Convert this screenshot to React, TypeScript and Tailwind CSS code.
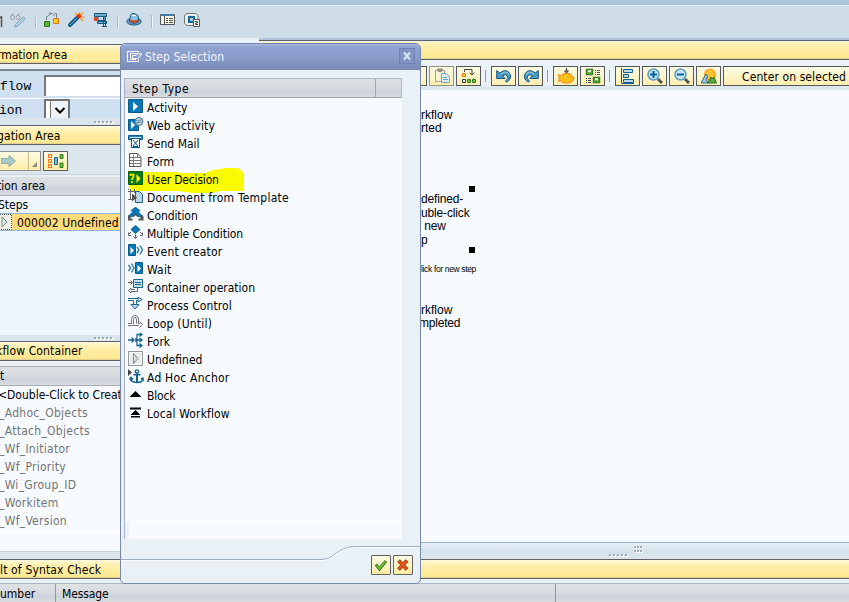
import type { ReactNode } from "react";

const TAHOMA = "font-['DejaVu_Sans_Condensed','DejaVu_Sans',sans-serif]";
const YELLOW =
  "border-y border-[#5f6063] bg-[linear-gradient(#fffbe0_0%,#fff3bc_18%,#ffeda0_45%,#ffe995_90%,#d9cb8c_100%)]";
const GREY = "bg-[linear-gradient(#dde1e4_0%,#d8dce0_45%,#cdd3dc_70%,#dadddf_100%)]";

function Svg({ children, w = 16, h = 16 }: { children: ReactNode; w?: number; h?: number }) {
  return (
    <svg width={w} height={h} viewBox={`0 0 ${w} ${h}`} fill="none" className="block shrink-0">
      {children}
    </svg>
  );
}

const B = "#0878b8";
const D = "#0a5a88";

const stepIcons: Record<string, ReactNode> = {
  activity: (
    <>
      <path d="M.5.5h14v13H.5z" fill={B} stroke={D} />
      <path d="M5 3v9l5-4.500z" fill="#fff" />
    </>
  ),
  web: (
    <>
      <path d="M.5 2.500h10v11H.5z" fill={B} stroke={D} />
      <path d="M3 4v8l4-4z" fill="#fff" />
      <circle cx="11" cy="4.500" r="4" fill="#bdd4e3" stroke="#50738c" />
      <path d="M8 3.500c2 1 4-1 6 1M9 7c1-3 3-3 4-5M7.500 5.500h6" stroke="#6d94ae" />
    </>
  ),
  mail: (
    <>
      <path d="M.5.500h14v4H.5z" fill="#2d86b8" stroke={D} />
      <path d="M2 2.500h11" stroke="#cfeaf7" />
      <path d="M3.500 3.500h8v9h-8z" fill="#fff" stroke={D} />
      <path d="M5 5l5 6M10 5l-5 6M5 11.500h5" stroke={D} />
    </>
  ),
  form: (
    <>
      <path d="M1.500.500h8l3.500 4v9H1.500z" fill="#fff" stroke="#555" />
      <path d="M9.500 0v4.500H13M2 4.500h8M2 7.500h11M2 10.500h11M5.500 2v11" stroke="#777" />
    </>
  ),
  decision: (
    <>
      <path d="M.5.500h14v13H.5z" fill="#067b19" stroke="#05610f" />
      <path d="M2.500 5V3.500h3V6L4 7.500V9M4 10v2" stroke="#ffe600" strokeWidth="1.700" />
      <path d="M8.500 3v9l4-4.500z" fill="#ff0" />
    </>
  ),
  document: (
    <>
      <path d="M0 2.500h10M2.500 0v10M6.500 0v4M0 .500h1M0 10.500h4" stroke="#666" />
      <path d="M7.500 2.500h4l3 3v8h-7z" fill="#b9d6ea" stroke="#245f88" />
      <path d="M4 4.500v8l5-4z" fill="#555" />
    </>
  ),
  condition: (
    <>
      <path d="M1.500 8.500L.500 10v2.500h4M13.500 8.500l1 1.500v2.500h-4M3 8l-2.500 4M12 8l2.500 4" stroke="#555" strokeWidth="2" />
      <path d="M7.500 0L12 3.500 10.500 5 14 8.500 11 10 7.500 7.500 4 10 1 8.500 4.500 5 3 3.500z" fill={B} stroke={D} strokeWidth=".6" />
      <path d="M5 9.500l2.500-2 2.500 2" stroke="#555" strokeWidth="1.500" />
    </>
  ),
  multiple: (
    <>
      <path d="M7.500.500l4.500 4-4.500 4-4.500-4z" fill={B} stroke={D} />
      <path d="M3 7L.700 9.500M.500 7.500v3H3M12 7l2.300 2.500M14.500 7.500v3H12M7.500 9.500v4M5.500 11.500l2 2 2-2" stroke="#666" />
    </>
  ),
  event: (
    <>
      <path d="M.5 1.500h7v11h-7z" fill={B} stroke={D} />
      <path d="M2.500 4v7L6 7.500z" fill="#fff" />
      <path d="M9 4l2 3-2 3M12 2.500L14.500 7 12 11.500" stroke="#397fa8" strokeWidth="1.500" />
    </>
  ),
  wait: (
    <>
      <path d="M7.500 1.500h7v11h-7z" fill={B} stroke={D} />
      <path d="M9.500 4v7L13 7.500z" fill="#fff" />
      <path d="M.5 4l2 3-2 3M3.500 2.500L6 7 3.500 11.500" stroke="#397fa8" strokeWidth="1.500" />
    </>
  ),
  container: (
    <>
      <path d="M5.500.500h9v8h-9z" fill="#c3dfed" stroke="#17638c" />
      <path d="M7 3.500h6M7 5.500h6" stroke="#17638c" />
      <path d="M0 3.500h4M2.500 1.500l2 2-2 2M9.500 9v3.500H3V14L.500 11.500 3 9v1.500h4" stroke="#666" />
    </>
  ),
  process: (
    <>
      <path d="M0 1.500h10M0 3.500h5.500v5M8.500 8.500v-5H10M10 0l4 2.500L10 5z" stroke="#15668f" fill="none" />
      <path d="M3 7.500h8L7 12z" fill="#b9dcf0" stroke="#15668f" />
    </>
  ),
  loop: (
    <>
      <path d="M3.500 9V4.500Q3.500.500 7 .500t3.500 4V9M5.500 9V4.500Q5.500 2.500 7 2.500t1.500 2V8.500M0 8.500h3.500M0 10.500h11M10.500 8.500h2M11.500 6.500l3 3-3 3" stroke="#777" />
    </>
  ),
  fork: (
    <>
      <path d="M0 7h6M3.500 4.500L6 7 3.500 9.500M7 6h2V1.500h5M7 8h2v4.500h5M8 7h6M11.500-.500L14 1.500l-2.500 2M11.500 5L14 7l-2.500 2M11.500 10.500L14 12.500l-2.500 2" stroke="#15668f" strokeWidth="1.300" />
    </>
  ),
  undefined: (
    <>
      <path d="M.5.500h14v14H.5z" stroke="#333" strokeDasharray="1 1" />
      <path d="M2 2h11v11H2z" fill="#ececec" />
      <path d="M5.500 2.500v10l4.500-5z" fill="#cfe2dd" stroke="#7b918d" />
    </>
  ),
  anchor: (
    <>
      <path d="M0 0v7l4-3.500z" fill="#444" />
      <path d="M9 4v10" stroke="#15668f" strokeWidth="2" />
      <circle cx="9" cy="2.500" r="1.700" stroke="#15668f" strokeWidth="1.300" />
      <path d="M5.500 5.800h7M3 8.500v3Q5 13.500 9 13.500t6-2v-3M1.500 10.500L3 8.500l2 2M13 10.500l2-2" stroke="#15668f" strokeWidth="1.500" />
    </>
  ),
  block: <path d="M7.500 4l6 6h-12z" fill="#000" />,
  local: (
    <>
      <path d="M2 3.500h11" stroke="#000" strokeWidth="2" />
      <path d="M7.500 5l5 5h-10zM3 11h9v1.500H3z" fill="#000" />
    </>
  ),
};

const steps: [string, string, string][] = [
  ["activity", "Activity", ""],
  ["web", "Web activity", "tracking-[0.1px]"],
  ["mail", "Send Mail", ""],
  ["form", "Form", ""],
  ["decision", "User Decision", "tracking-[-0.17px]"],
  ["document", "Document from Template", "tracking-[0.22px]"],
  ["condition", "Condition", "tracking-[-0.1px]"],
  ["multiple", "Multiple Condition", "tracking-[-0.1px]"],
  ["event", "Event creator", "tracking-[0.18px]"],
  ["wait", "Wait", "tracking-[0.2px]"],
  ["container", "Container operation", ""],
  ["process", "Process Control", "tracking-[0.1px]"],
  ["loop", "Loop (Until)", "tracking-[0.2px]"],
  ["fork", "Fork", ""],
  ["undefined", "Undefined", ""],
  ["anchor", "Ad Hoc Anchor", "tracking-[0.22px]"],
  ["block", "Block", "tracking-[-0.15px]"],
  ["local", "Local Workflow", "tracking-[0.14px]"],
];

function TopSep() {
  return <div className="h-[13px] w-[2px] border-l border-[#a3b9d0] bg-[#eef4f9]" />;
}

function TopToolbar() {
  return (
    <header className="flex h-[33px] shrink-0 items-start border-t border-[#dce8f2] bg-[#cfdde8] pt-[6px]">
      <div className="w-[10px]">
        <Svg w={4}>
          <path d="M0 5.500h2M1.500 4v11" stroke="#555" strokeWidth="1.500" />
        </Svg>
      </div>
      <div className="w-[25px]">
        <Svg>
          <path d="M1 4q1-3 3-2M7 4q1-3 3-2" stroke="#9da5a9" />
          <circle cx="2.500" cy="5.500" r="2" stroke="#9da5a9" />
          <circle cx="8" cy="5.500" r="2" stroke="#9da5a9" />
          <path d="M13.500 4.500l-8 8L4.500 15l3-.500 8-8z" fill="#b4d0df" stroke="#86a6bb" />
        </Svg>
      </div>
      <div className="flex w-[9px] pt-[3px]"><TopSep /></div>
      <div className="w-[24px]">
        <Svg>
          <path d="M.5 9.500h5v5h-5z" fill="#55b626" stroke="#346f25" />
          <path d="M9.500 6.500h5v5h-5z" fill="#ffca16" stroke="#e37418" />
          <path d="M2.500 8V4.500h1l3-3h2l2 2.500M6 0v3M12.500 6V1.500h-2" stroke="#768491" />
        </Svg>
      </div>
      <div className="w-[25px]">
        <Svg>
          <path d="M2 13L9 6" stroke="#195b88" strokeWidth="4" strokeLinecap="round" />
          <path d="M2 13L9 6" stroke="#69aed0" strokeLinecap="round" />
          <path d="M9.500 5.500l3-3" stroke="#d72b13" strokeWidth="4" />
          <path d="M7 1l2 2M12-.500l-1 3M15 1l-3 2M16 5h-3M15 9l-3-3" stroke="#f59a19" strokeWidth="1.300" />
        </Svg>
      </div>
      <div className="w-[24px]">
        <Svg>
          <path d="M1.500 1.500h12v3h-12zM4.500 9.500h9v2h-9z" fill="#6fabc9" stroke="#115b86" />
          <path d="M5 4.500h7v4H5z" fill="#c1d9e5" stroke="#115b86" />
          <path d="M10.500 4v10M12.500 4v10M9 14.500h5" stroke="#115b86" />
          <circle cx="3" cy="7" r="2.300" fill="#d94b24" />
        </Svg>
      </div>
      <div className="flex w-[9px] pt-[3px]"><TopSep /></div>
      <div className="w-[25px]">
        <Svg>
          <ellipse cx="8" cy="9.500" rx="7.300" ry="3.500" fill="#5c9fc8" stroke="#165d89" />
          <path d="M3.500 9.500l1-6Q5.500.500 8 1.500T12 3.500l.800 6Q8 13 3.500 9.500z" fill="#8fc2e1" stroke="#165d89" />
          <path d="M3.500 8.500Q8 11 12.500 8.500" stroke="#c94625" strokeWidth="2.300" />
          <path d="M6 3.500h4" stroke="#fff" />
        </Svg>
      </div>
      <div className="flex w-[9px] pt-[3px]"><TopSep /></div>
      <div className="w-[24px]">
        <Svg>
          <path d="M.5 2.500h14v10H.5z" fill="#f5f1e5" stroke="#555" />
          <path d="M1 3h13" stroke="#447aa3" strokeWidth="2" />
          <path d="M6 6.500h2M9 6.500h4M6 8.500h2M9 8.500h4M6 10.500h2M9 10.500h4" stroke="#555" />
          <path d="M4.500 4v8" stroke="#555" />
        </Svg>
      </div>
      <Svg>
        <path d="M3 1.500h9l2 2v8l-2 2H3L.500 11.500V3.500z" fill="#e7eef2" stroke="#777" />
        <path d="M5 5h5v5H5z" fill="#abd1e3" stroke="#156693" strokeWidth="2" />
        <path d="M9.500 7.500h6v7h-6z" fill="#fff" stroke="#555" />
        <path d="M11 9.500h2.500v1.500h-2v1.500H14" stroke="#444" />
      </Svg>
    </header>
  );
}

function Bar({ children, className = "" }: { children?: ReactNode; className?: string }) {
  return (
    <div className={`flex h-[20px] shrink-0 items-center whitespace-nowrap ${YELLOW} ${className}`}>
      {children}
    </div>
  );
}

function Dots({ className = "" }: { className?: string }) {
  return (
    <div className={`flex gap-[2px] ${className}`}>
      {[0, 1, 2, 3, 4].map((n) => (
        <i key={n} className="size-[2px] bg-[#9da9b8] shadow-[1px_1px_0_#fff]" />
      ))}
    </div>
  );
}

function LeftColumn() {
  return (
    <aside className="flex w-[259px] shrink-0 flex-col bg-[#e9f1f7] text-[12px]">
      <div className="h-[6px]" />
      <Bar><span className="-ml-[3px] pt-[2px]">rmation Area</span></Bar>
      <div className="h-[5px]" />
      <div className="h-[49px] border-t-2 border-[#7f858c] bg-[#cfe0f0] font-['Liberation_Mono',monospace] text-[13px]">
        <div className="flex h-[28px] items-center border-b border-white pt-[1px]">
          <span className="w-[44px] pt-[3px]">flow</span>
          <div className="h-[21px] w-[200px] border-t-2 border-l-2 border-[#777a7e] bg-white" />
        </div>
        <div className="flex h-[19px] items-start">
          <span className="w-[44px] pt-[2px] -ml-px">ion</span>
          <div className="ml-px flex h-[19px] w-[26px] border-t-2 border-r-2 border-l-2 border-[#707378] bg-white pl-[4px]">
            <div className="flex flex-1 justify-center border-l border-[#777] bg-[#edf2f6] pt-[5px]">
              <Svg w={12} h={9}>
                <path d="M1.500 2l4.500 4.500L10.500 2" stroke="#000" strokeWidth="2" />
              </Svg>
            </div>
          </div>
        </div>
      </div>
      <div className="h-[7px] bg-[#dce5ed] pt-[3px] pl-[94px]"><Dots /></div>
      <Bar><span className="-ml-[3px] pt-[1px] tracking-[0.1px]">gation Area</span></Bar>
      <div className="flex h-[30px] items-center gap-[3px] border-b border-[#c7d2dc] bg-[#dbe6ed] pt-[2px]">
        <div className="flex h-[20px] w-[41px] border border-l-0 border-[#8f9091] bg-[linear-gradient(#fffbe2,#ffeda7)]">
          <div className="flex w-[29px] items-center border-r border-[#c7bd94] pl-px">
            <Svg w={16} h={14}>
              <path d="M0 4.500h8V1.500l6.500 5.500L8 12.500V9.500H0z" fill="#a9cbc8" stroke="#8caaa3" />
            </Svg>
          </div>
          <div className="pt-[9px] pl-[3px]">
            <Svg w={7} h={7}><path d="M5 1v5H0z" fill="#8d8c83" /></Svg>
          </div>
        </div>
        <div className="flex h-[20px] w-[25px] items-center justify-center border border-[#606060] bg-[linear-gradient(#fffbe2,#ffeda7)] -ml-px">
          <Svg>
            <path d="M.5 1.500h3v3h-3zM.500 6.500h3v3h-3zM.500 11.500h3v3h-3z" stroke="#ef7b20" strokeWidth="1.200" />
            <path d="M6.500 4.500h3v7h-3z" fill="#7eb9dc" stroke="#176592" />
            <path d="M12 1.500h3v4h-3zM12 10h3v4.500h-3z" fill="#67b941" stroke="#368022" />
          </Svg>
        </div>
      </div>
      <div className={`mt-[2px] flex h-[19px] items-center border-b border-[#a8afb8] ${GREY}`}>
        <span className="-ml-[3px]">tion area</span>
      </div>
      <div className="h-[139px] shrink-0 bg-[#eff6fd]">
        <div className="flex h-[17px] items-center"><span className="-ml-[2px]">Steps</span></div>
        <div className="flex h-[18px] items-center overflow-hidden border-y border-[#91b6cf] bg-[#ffdb7d]">
          <div className="h-[16px] w-[12px] bg-[#f1eee5]">
            <Svg w={12} h={16}>
              <path d="M0 .500h11.500v15H0" stroke="#555" strokeDasharray="1 1" />
              <path d="M2 3v10l5-5z" fill="#d5e8e1" stroke="#7d918d" />
            </Svg>
          </div>
          <span className="ml-[5px] pt-px tracking-[0.1px]">000002 Undefined</span>
        </div>
      </div>
      <div className="h-[6px] bg-[#dbe5ed] pt-[2px] pl-[94px]"><Dots /></div>
      <Bar><span className="-ml-[4px] tracking-[0.13px]">kflow Container</span></Bar>
      <div className={`mt-[5px] flex h-[20px] shrink-0 items-center border-y border-[#a8afb8] ${GREY}`}>t</div>
      <div className="h-[165px] shrink-0 bg-[#f7fbff]">
        <div className="flex h-[18px] items-center whitespace-nowrap"><span className="-ml-[2px]">&lt;Double-Click to Creat</span></div>
        {["_Adhoc_Objects", "_Attach_Objects", "_Wf_Initiator", "_Wf_Priority", "_Wi_Group_ID", "_Workitem", "_Wf_Version"].map((t) => (
          <div key={t} className="flex h-[18px] items-center text-[#747474]">
            <span className="-ml-px tracking-[0.28px]">{t}</span>
          </div>
        ))}
        <div className="mt-[2px] h-px bg-white" />
      </div>
      <div className="flex-1 border-t border-[#c5d1da] bg-[#dce6ed]" />
    </aside>
  );
}

function Tool({ children, faded = false }: { children?: ReactNode; faded?: boolean }) {
  return (
    <div
      className={`mr-[2px] flex h-[20px] w-[25px] shrink-0 items-center justify-center border bg-[linear-gradient(#fffce6,#ffeeae)] ${faded ? "border-[#99927b]" : "border-[#57585a]"}`}
    >
      {children}
    </div>
  );
}

function ToolSep() {
  return <div className="mr-[5px] ml-[2px] h-[12px] w-px bg-[#989a9c]" />;
}

const undo = (
  <>
    <path d="M.7 2.500v8h8.500L6.500 7.800Q9.500 5.500 11.300 8T9.500 13l1 1.200Q15.800 11.500 14.300 6.500 11-.500 3.800 5z" fill="#4b9ac4" stroke="#155c88" />
    <path d="M4.500 6Q11 1.500 13 7" stroke="#a5d2e9" />
  </>
);

function Zoom({ plus = false }: { plus?: boolean }) {
  return (
    <Svg>
      <path d="M11 11l4 4" stroke="#555" strokeWidth="3" />
      <circle cx="6.500" cy="6.500" r="5.500" fill="#c5e5f4" stroke="#5b9dbd" strokeWidth="1.500" />
      <path d={plus ? "M3 6.500h7M6.500 3v7" : "M3 6.500h7"} stroke="#075f96" strokeWidth="2" />
    </Svg>
  );
}

function Editor() {
  return (
    <main className="flex min-w-0 flex-1 flex-col">
      <div className="h-[4px] shrink-0 border-t-2 border-b border-t-[#b2c4d5] border-b-[#e9f1f7] bg-[#5f6063]" />
      <div className={`h-[18px] shrink-0 border-b border-[#5f6063] bg-[linear-gradient(#fff3bc_0%,#ffeda0_40%,#ffe995_90%,#d9cb8c_100%)]`} />
      <div className="flex h-[30px] shrink-0 items-start overflow-hidden border-b-[4px] border-[#dde7ef] bg-[#eaf1f7] pt-[6px] pl-[143px]">
        <Tool />
        <Tool faded>
          <Svg>
            <path d="M1.500 2.500h9v11h-9z" fill="#f9f4d8" stroke="#a5a291" />
            <path d="M3 1.500h6M4 3h4" stroke="#8e9082" strokeWidth="2" />
            <path d="M7.500 5.500h5l3 3v6h-8z" fill="#dcecf0" stroke="#76a5b8" />
            <path d="M9 9.500h4M9 11.500h5" stroke="#68a0b7" />
          </Svg>
        </Tool>
        <Tool>
          <Svg>
            <path d="M1.500 5.500h3v3h-3z" fill="#ffd43d" stroke="#e77919" />
            <path d="M3.500 4V1.500H11v5M8.500 4.500L11 7l2.500-2.500" stroke="#444" />
            <path d="M1.500 11.500h3v3h-3z" fill="#fff" stroke="#333" />
            <path d="M6.500 11.500h3v3h-3zM11.500 11.500h3v3h-3z" fill="#67b936" stroke="#367f21" />
          </Svg>
        </Tool>
        <div className="flex h-[20px] items-center"><ToolSep /></div>
        <Tool><Svg>{undo}</Svg></Tool>
        <Tool><Svg><g transform="translate(16 0) scale(-1 1)">{undo}</g></Svg></Tool>
        <div className="flex h-[20px] items-center"><ToolSep /></div>
        <Tool>
          <Svg w={18}>
            <path d="M1.500 6.500l2.500 1Q6 5 10 5t7 5q-1 5-7 5T4 12.500l-2.500 1Q3 10 1.500 6.500z" fill="#ffbd18" stroke="#f28516" />
            <path d="M9.500 0v4.500M7.500 2.500l2 2 2-2" stroke="#555" strokeWidth="1.300" />
          </Svg>
        </Tool>
        <Tool>
          <Svg>
            <path d="M1.500 1.500h6v5h-6zM8.500 9.500h6v5h-6z" fill="#68b448" stroke="#367d25" strokeWidth="1.500" />
            <path d="M3 2h3v2H3zM10 10h3v2h-3z" fill="#d9efcc" />
            <path d="M10 2.500h1M12 2.500h3M10 4.500h1M12 4.500h3M10 6.500h1M12 6.500h3M1 10.500h1M3 10.500h3M1 12.500h1M3 12.500h3M1 14.500h1M3 14.500h3" stroke="#555" />
          </Svg>
        </Tool>
        <div className="flex h-[20px] items-center"><ToolSep /></div>
        <Tool>
          <Svg>
            <path d="M1.500 0v15.500H14" stroke="#125d89" />
            <path d="M3.500 1.500h9v3h-9zM3.500 6.500h5v3h-5zM3.500 11.500h10v3h-10z" fill="#b9dcec" stroke="#125d89" />
          </Svg>
        </Tool>
        <Tool><Zoom plus /></Tool>
        <Tool><Zoom /></Tool>
        <Tool>
          <Svg>
            <circle cx="9" cy="6.500" r="6" fill="#ff9d18" />
            <circle cx="9" cy="6" r="4.500" fill="#ffc535" />
            <path d="M0 15L5 6l2 3-2 2 2 4z" fill="#a7c8d5" stroke="#246b94" />
            <path d="M6.500 15l3.500-6 1.500 2L13 9l2.500 6z" fill="#56a83f" stroke="#27732a" />
          </Svg>
        </Tool>
        <div className="flex h-[20px] w-[160px] shrink-0 items-center border border-[#57585a] bg-[linear-gradient(#fffce6,#ffeeae)] pt-px pl-[18px] text-[12px] tracking-[0.1px] whitespace-nowrap">
          Center on selected
        </div>
      </div>
      <div className="relative flex-1 overflow-hidden bg-[#f7fbff] font-['Liberation_Sans',sans-serif] text-[12px] leading-[13px]">
        <p className="absolute top-[19px] left-[162px]">rkflow<br />rted</p>
        <p className="absolute top-[103px] left-[162px] leading-[13.500px] tracking-[-0.15px]">defined-<br />uble-click<br />&nbsp;new<br />p</p>
        <p className="absolute top-[173px] left-[162px] text-[8.500px] tracking-[-0.35px]">lick for new step</p>
        <p className="absolute top-[214px] left-[162px]">rkflow<br /><span className="-ml-[2px] tracking-[-0.2px]">mpleted</span></p>
        <i className="absolute top-[96px] left-[210px] size-[6px] bg-black" />
        <i className="absolute top-[157px] left-[210px] size-[6px] bg-black" />
      </div>
      <div className="flex h-[17px] shrink-0 flex-col border-t border-[#9eb2c8] bg-[linear-gradient(#e7f0f8_0%,#d3e1ec_60%,#dbe6ea_64%)] pt-[3px]">
        <div className="ml-[375px] grid w-[8px] grid-cols-3 gap-x-px gap-y-[2px]">
          {[0, 1, 2, 3, 4, 5].map((n) => (
            <i key={n} className="size-[2px] bg-[#9fabb9] shadow-[1px_1px_0_#fff]" />
          ))}
        </div>
        <Dots className="mt-[2px] ml-[350px]" />
      </div>
    </main>
  );
}

function DialogButton({ children }: { children: ReactNode }) {
  return (
    <button className="flex size-[20px] items-center justify-center rounded-[1px] border border-[#62615b] bg-[linear-gradient(#fffce6,#ffeba0)]">
      {children}
    </button>
  );
}

function StepDialog() {
  return (
    <section className="absolute top-[43px] left-[120px] flex h-[541px] w-[301px] flex-col overflow-hidden rounded-[5px] border border-[#7589ad] bg-[#e9f0f6]">
      <div className="flex h-[26px] shrink-0 items-center bg-[linear-gradient(#a7b6dc_0%,#8fa2d0_12%,#899bca_55%,#7688b2_100%)] pr-[5px] pl-[6px] text-white">
        <Svg>
          <path d="M11.500 4V2.500H.5v10h11V10M3 4.500h6M3.500 5v5M9 10.500H3.500M5.500 9.500v-3H9V5h6l-4 4.500z" stroke="#fff" />
        </Svg>
        <span className="ml-[2px] flex-1 text-[12px] text-[#f1f4ff] tracking-[0.1px]">Step Selection</span>
        <span className="-mt-[2px] flex size-[16px] items-center justify-center border border-[#7082ae] bg-[#8194c3]">
          <Svg w={10} h={10}><path d="M2 1.500l6 7M8 1.500l-6 7" stroke="#dbe4ff" strokeWidth="2" /></Svg>
        </span>
      </div>
      <div className="mt-[8px] ml-[3px] flex h-[461px] w-[278px] shrink-0 flex-col border-l border-[#a7b2c6] bg-[#f7fbff]">
        <div className={`flex h-[20px] shrink-0 border border-l-0 border-[#b0b8c1] border-b-[#9ea5ad] ${GREY}`}>
          <div className="flex w-[251px] items-center border-r border-[#a3aab1] pt-[2px] pl-[7px] text-[12px] tracking-[0.5px]">Step Type</div>
        </div>
        <div className="relative">
          <svg className="absolute top-[70px] left-[5px]" width="116" height="28" viewBox="0 0 116 28">
            <path d="M0 4h48l2 1h25l8-3 8-1 3-1h14l6 5v18H91l-9 2H63l-16-2H0z" fill="#f9fb00" />
          </svg>
          <div className="relative">
            {steps.map(([icon, name, spacing]) => (
              <div key={icon} className="flex h-[18px] items-center pl-[3px] text-[12px] whitespace-nowrap">
                <Svg>{stepIcons[icon]}</Svg>
                <span className={`ml-[3px] pt-[2px] ${spacing}`}>{name}</span>
              </div>
            ))}
          </div>
        </div>
        <div className="mt-auto h-[18px] border-y border-l-[4px] border-y-white border-l-[#eaf1f7]" />
      </div>
      <div className="relative flex-1">
        <svg className="absolute inset-x-0 top-[7px]" width="299" height="15" viewBox="0 0 299 15">
          <path d="M0 14.500H200C214 14.500 216 1.500 234 1.500H299" fill="none" stroke="#fff" />
          <path d="M0 13.500H200C214 13.500 216 .5 234 .5H299" fill="none" stroke="#9eadc6" />
        </svg>
        <div className="flex justify-end gap-[2px] pt-[16px] pr-[7px]">
          <DialogButton>
            <Svg w={14} h={14}><path d="M2 6.500l3.500 4.500L12 3" stroke="#2d7630" strokeWidth="3.200" /><path d="M2.500 7l3 3.500L11.500 3.500" stroke="#76be25" strokeWidth="1.800" /></Svg>
          </DialogButton>
          <DialogButton>
            <Svg w={14} h={14}><path d="M2.500 2.500l8.500 9M11 2.500l-8.500 9" stroke="#a33216" strokeWidth="3.800" /><path d="M3 3l7.500 8M10.500 3L3 11" stroke="#e75a17" strokeWidth="2.200" /></Svg>
          </DialogButton>
        </div>
      </div>
    </section>
  );
}

export default function App() {
  return (
    <div className={`relative flex h-[602px] w-[849px] flex-col overflow-hidden bg-[#e9f1f7] text-black ${TAHOMA}`}>
      <div className="h-[5px] shrink-0 bg-[#aec5dc]" />
      <TopToolbar />
      <div className="flex h-[521px] shrink-0 overflow-hidden">
        <LeftColumn />
        <Editor />
      </div>
      <Bar className="text-[12px]"><span className="pt-px tracking-[0.15px]">lt of Syntax Check</span></Bar>
      <div className={`mt-[4px] flex h-[19px] shrink-0 border-t border-[#a9b5c2] text-[12px] ${GREY}`}>
        <div className="flex w-[56px] items-center border-r border-[#9199a3] pt-[2px]"><span>umber</span></div>
        <div className="flex w-[500px] items-center border-r border-[#9199a3] pt-[2px] pl-[6px] tracking-[-0.1px]">Message</div>
      </div>
      <StepDialog />
    </div>
  );
}
